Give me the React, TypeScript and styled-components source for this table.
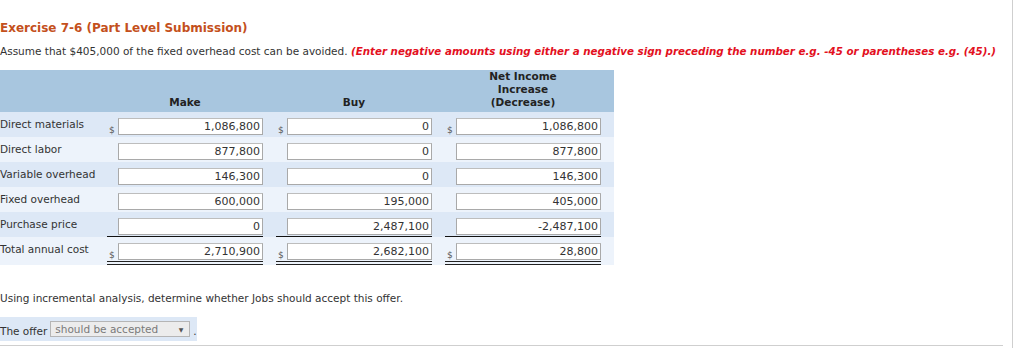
import styled, {createGlobalStyle} from "styled-components";

const GlobalStyle = createGlobalStyle`
  html, body {
    margin: 0;
    padding: 0;
    background: #fff;
  }
  body {
    font-family: "DejaVu Sans", Verdana, sans-serif;
    color: #333;
  }
`

type Underline = "none" | "single" | "double"

interface CellData {
    value: string
    dollar?: boolean
}

interface RowData {
    label: string
    cells: CellData[]
    underline: Underline
}

const rows: RowData[] = [
    {label: "Direct materials", cells: [{value: "1,086,800", dollar: true}, {value: "0", dollar: true}, {value: "1,086,800", dollar: true}], underline: "none"},
    {label: "Direct labor", cells: [{value: "877,800"}, {value: "0"}, {value: "877,800"}], underline: "none"},
    {label: "Variable overhead", cells: [{value: "146,300"}, {value: "0"}, {value: "146,300"}], underline: "none"},
    {label: "Fixed overhead", cells: [{value: "600,000"}, {value: "195,000"}, {value: "405,000"}], underline: "none"},
    {label: "Purchase price", cells: [{value: "0"}, {value: "2,487,100"}, {value: "-2,487,100"}], underline: "single"},
    {label: "Total annual cost", cells: [{value: "2,710,900", dollar: true}, {value: "2,682,100", dollar: true}, {value: "28,800", dollar: true}], underline: "double"},
]

export default function App() {
    return (
        <Page>
            <GlobalStyle/>
            <Title>Exercise 7-6 (Part Level Submission)</Title>
            <Question>
                Assume that $405,000 of the fixed overhead cost can be avoided.{" "}
                <Hint>(Enter negative amounts using either a negative sign preceding the number e.g. -45 or parentheses e.g. (45).)</Hint>
            </Question>

            <Table>
                <HeaderRow>
                    <LabelCol/>
                    <HeadCell>Make</HeadCell>
                    <HeadCell>Buy</HeadCell>
                    <HeadCell>Net Income<br/>Increase<br/>(Decrease)</HeadCell>
                </HeaderRow>
                {rows.map((row, i) => (
                    <Row key={row.label} $shade={i % 2 === 0} $tall={row.underline === "double"}>
                        <Label>{row.label}</Label>
                        {row.cells.map((cell, j) => (
                            <Cell key={j} $underline={row.underline}>
                                <Dollar>{cell.dollar ? "$" : ""}</Dollar>
                                <Field>{cell.value}</Field>
                            </Cell>
                        ))}
                    </Row>
                ))}
            </Table>

            <Prompt>Using incremental analysis, determine whether Jobs should accept this offer.</Prompt>

            <Answer>
                The offer
                <Select>
                    <span>should be accepted</span>
                    <Arrow>▼</Arrow>
                </Select>
                .
            </Answer>
            <Rule/>
        </Page>
    )
}

const Page = styled.div`
  width: 1013px;
  height: 348px;
  border-right: 1px solid #cfcfcf;
  box-sizing: border-box;
  padding-top: 20px;
  overflow: hidden;
`

const Title = styled.div`
  font-size: 12px;
  font-weight: 700;
  color: #c4501c;
  line-height: 16px;
  height: 16px;
`

const Question = styled.div`
  margin-top: 8px;
  font-size: 10.5px;
  line-height: 14px;
  color: #333;
  white-space: nowrap;
`

const Hint = styled.span`
  color: #e3101e;
  font-weight: 700;
  font-style: italic;
  font-size: 10.3px;
`

const Table = styled.div`
  margin-top: 12px;
  width: 614px;
  display: flex;
  flex-direction: column;
`

const HeaderRow = styled.div`
  display: flex;
  align-items: flex-end;
  height: 42px;
  background: #a8c6df;
  box-sizing: border-box;
  padding-bottom: 3px;
`

const LabelCol = styled.div`
  width: 107px;
  flex: none;
`

const HeadCell = styled.div`
  width: 156px;
  margin-right: 13px;
  flex: none;
  text-align: center;
  font-size: 10.5px;
  font-weight: 700;
  line-height: 13px;
  color: #222;
`

const Row = styled.div<{ $shade: boolean; $tall: boolean }>`
  display: flex;
  align-items: flex-start;
  height: ${p => (p.$tall ? 28 : 25)}px;
  background: ${p => (p.$shade ? "#dde8f6" : "#edf3fb")};
  box-sizing: border-box;
  padding-top: 6px;
`

const Label = styled.div`
  width: 107px;
  flex: none;
  font-size: 10.5px;
  line-height: 13px;
  color: #333;
  white-space: nowrap;
`

const Cell = styled.div<{ $underline: Underline }>`
  width: 156px;
  margin-right: 13px;
  flex: none;
  display: flex;
  align-items: flex-end;
  padding-bottom: ${p => (p.$underline === "none" ? 0 : 1)}px;
  border-bottom: ${p =>
    p.$underline === "single" ? "2px solid #111" :
    p.$underline === "double" ? "4px double #222" : "0"};
`

const Dollar = styled.div`
  width: 11px;
  flex: none;
  font-size: 9px;
  line-height: 10px;
  color: #555;
  padding-left: 2px;
  box-sizing: border-box;
`

const Field = styled.div`
  width: 145px;
  height: 17px;
  box-sizing: border-box;
  border: 1px solid #a9a9a9;
  border-top-color: #bdbdbd;
  background: #fff;
  font-size: 11px;
  line-height: 15px;
  text-align: right;
  padding-right: 2px;
  color: #333;
`

const Prompt = styled.div`
  margin-top: 26px;
  font-size: 10.5px;
  line-height: 14px;
  color: #333;
`

const Answer = styled.div`
  margin-top: 12px;
  width: 197px;
  height: 24px;
  box-sizing: border-box;
  background: #dde8f6;
  display: flex;
  align-items: center;
  gap: 3px;
  padding-top: 4px;
  font-size: 10.5px;
  color: #333;
`

const Select = styled.div`
  width: 140px;
  height: 16px;
  box-sizing: border-box;
  border: 1px solid #b5b5b5;
  background: #ececec;
  display: flex;
  align-items: center;
  justify-content: space-between;
  padding: 0 6px 0 4px;
  color: #7a7a7a;
  font-size: 10.5px;
  margin-top: -4px;
`

const Arrow = styled.span`
  font-size: 6px;
  color: #555;
`

const Rule = styled.div`
  margin-top: 4px;
  width: 1003px;
  height: 1px;
  background: #cfcfcf;
`
